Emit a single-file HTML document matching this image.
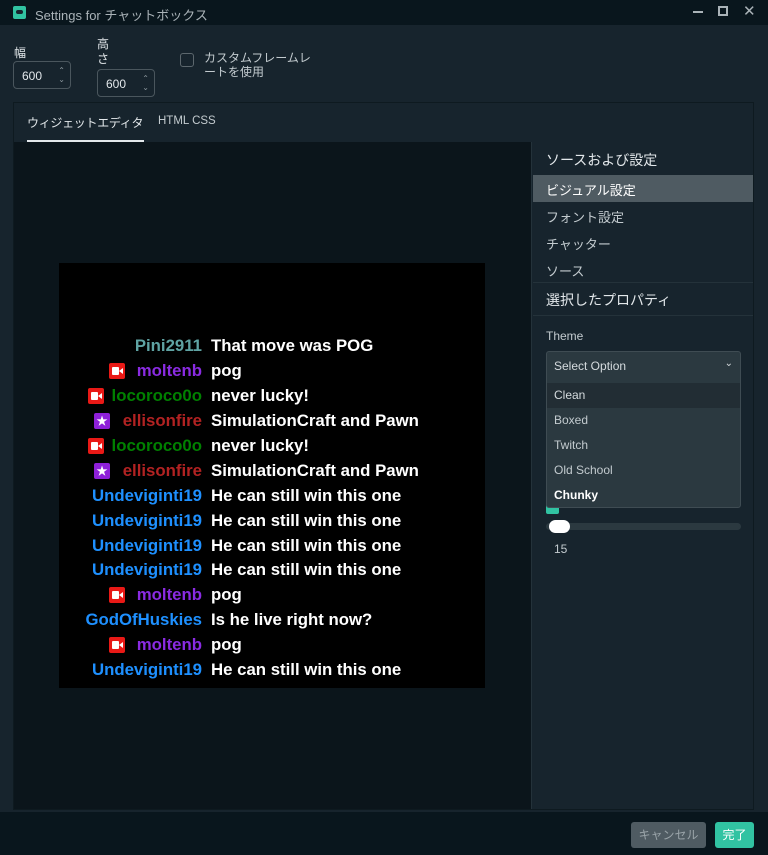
<!DOCTYPE html>
<html><head><meta charset="utf-8"><style>
*{margin:0;padding:0;box-sizing:border-box}
body{width:768px;height:855px;background:#17242d;font-family:"Liberation Sans","Noto Sans CJK JP",sans-serif;color:#e3e8eb;position:relative;overflow:hidden;font-size:12px}
.abs{position:absolute}
.title{left:0;top:0;width:768px;height:25px;background:#09161d}
.inp{border:1px solid #4a565d;border-radius:4px;width:58px;height:28px;font-size:12px;padding:7px 0 0 8px;color:#e3e8eb}
.arr{position:absolute;right:5px;top:4px;color:#8a959b;font-size:8px;line-height:9px}
.line{position:absolute;left:0;width:426px;height:24px;font-weight:bold;font-size:16.8px;font-family:"Liberation Sans",sans-serif}
.nm{position:absolute;right:283px;top:3px;white-space:nowrap}
.msg{position:absolute;left:152px;top:3px;color:#fff;white-space:nowrap}
.ic{position:absolute;top:5px;width:16px;height:16px;border-radius:2px}
.cam{background:#e91916}
.cam:after{content:"";position:absolute;left:3px;top:4px;width:7px;height:8px;background:#fff;border-radius:1px}
.cam:before{content:"";position:absolute;left:10px;top:5px;border:3px solid transparent;border-right:4px solid #fff;border-left:0;}
.sub{background:#8e20d8;color:#fff;font-size:12px;text-align:center;line-height:16px}
.side{font-size:13px;color:#c3cbcf}
.opt{position:absolute;left:0;width:194px;height:25px;padding:5px 0 0 7px;font-size:12px;color:#c3cbcf}
</style></head><body>
<div class="abs title">
 <div class="abs" style="left:13px;top:6px;width:13px;height:13px;background:#31c3a2;border-radius:2px"><div style="position:absolute;left:3px;top:4px;width:7px;height:4px;background:#17242d;border-radius:2px"></div></div>
 <div class="abs" style="left:35px;top:5px;font-size:13px;color:#aab3b8">Settings for チャットボックス</div>
 <div class="abs" style="left:693px;top:11px;width:10px;height:2px;background:#aab3b8"></div>
 <div class="abs" style="left:718px;top:6px;width:10px;height:10px;border:2px solid #aab3b8"></div>
 <div class="abs" style="left:743px;top:2px;font-size:15px;color:#aab3b8">✕</div>
</div>
<div class="abs" style="left:14px;top:44px;font-size:12px">幅</div>
<div class="abs inp" style="left:13px;top:61px">600<div class="arr">⌃<br>⌄</div></div>
<div class="abs" style="left:97px;top:37px;font-size:12px;line-height:15px">高<br>さ</div>
<div class="abs inp" style="left:97px;top:69px">600<div class="arr">⌃<br>⌄</div></div>
<div class="abs" style="left:180px;top:53px;width:14px;height:14px;border:1px solid #5c676d;border-radius:3px"></div>
<div class="abs" style="left:204px;top:51px;font-size:12px;line-height:14px;color:#c3cbcf">カスタムフレームレ<br>ートを使用</div>

<div class="abs" style="left:13px;top:102px;width:741px;height:708px;border:1px solid #0e1a20;background:#17242d"></div>
<div class="abs" style="left:27px;top:114px;font-size:12px;color:#e3e8eb;letter-spacing:-0.3px">ウィジェットエディタ</div>
<div class="abs" style="left:27px;top:140px;width:117px;height:2px;background:#e3e8eb"></div>
<div class="abs" style="left:158px;top:115px;font-size:11.5px;color:#c3cbcf">HTML CSS</div>
<div class="abs" style="left:14px;top:142px;width:517px;height:667px;background:#0b151b"></div>
<div class="abs" style="left:531px;top:142px;width:1px;height:667px;background:#24323a"></div>

<div class="abs" style="left:59px;top:263px;width:426px;height:425px;background:#000">
 <div class="line" style="top:70px"><span class="nm" style="color:#5fa3a3">Pini2911</span><span class="msg">That move was POG</span></div>
 <div class="line" style="top:95px"><div class="ic cam" style="left:50px"></div><span class="nm" style="color:#8a2be2">moltenb</span><span class="msg">pog</span></div>
 <div class="line" style="top:120px"><div class="ic cam" style="left:29px"></div><span class="nm" style="color:#008000">locoroco0o</span><span class="msg">never lucky!</span></div>
 <div class="line" style="top:145px"><div class="ic sub" style="left:35px">★</div><span class="nm" style="color:#b22222">ellisonfire</span><span class="msg">SimulationCraft and Pawn</span></div>
 <div class="line" style="top:170px"><div class="ic cam" style="left:29px"></div><span class="nm" style="color:#008000">locoroco0o</span><span class="msg">never lucky!</span></div>
 <div class="line" style="top:195px"><div class="ic sub" style="left:35px">★</div><span class="nm" style="color:#b22222">ellisonfire</span><span class="msg">SimulationCraft and Pawn</span></div>
 <div class="line" style="top:220px"><span class="nm" style="color:#1e90ff">Undeviginti19</span><span class="msg">He can still win this one</span></div>
 <div class="line" style="top:245px"><span class="nm" style="color:#1e90ff">Undeviginti19</span><span class="msg">He can still win this one</span></div>
 <div class="line" style="top:270px"><span class="nm" style="color:#1e90ff">Undeviginti19</span><span class="msg">He can still win this one</span></div>
 <div class="line" style="top:294px"><span class="nm" style="color:#1e90ff">Undeviginti19</span><span class="msg">He can still win this one</span></div>
 <div class="line" style="top:319px"><div class="ic cam" style="left:50px"></div><span class="nm" style="color:#8a2be2">moltenb</span><span class="msg">pog</span></div>
 <div class="line" style="top:344px"><span class="nm" style="color:#1e90ff">GodOfHuskies</span><span class="msg">Is he live right now?</span></div>
 <div class="line" style="top:369px"><div class="ic cam" style="left:50px"></div><span class="nm" style="color:#8a2be2">moltenb</span><span class="msg">pog</span></div>
 <div class="line" style="top:394px"><span class="nm" style="color:#1e90ff">Undeviginti19</span><span class="msg">He can still win this one</span></div>
</div>

<div class="abs" style="left:546px;top:150px;font-size:14px;color:#e3e8eb">ソースおよび設定</div>
<div class="abs" style="left:533px;top:175px;width:220px;height:27px;background:#4f5b62"></div>
<div class="abs side" style="left:546px;top:180px;color:#fff">ビジュアル設定</div>
<div class="abs side" style="left:546px;top:207px">フォント設定</div>
<div class="abs side" style="left:546px;top:234px">チャッター</div>
<div class="abs side" style="left:546px;top:261px">ソース</div>
<div class="abs" style="left:533px;top:282px;width:220px;height:1px;background:#24323a"></div>
<div class="abs" style="left:546px;top:290px;font-size:14px;color:#e3e8eb">選択したプロパティ</div>
<div class="abs" style="left:533px;top:315px;width:220px;height:1px;background:#24323a"></div>
<div class="abs" style="left:546px;top:329px;font-size:12px;color:#c3cbcf">Theme</div>
<div class="abs" style="left:546px;top:504px;width:13px;height:10px;background:#31c3a2;border-radius:2px"></div>
<div class="abs" style="left:546px;top:523px;width:195px;height:7px;background:#2b3940;border-radius:4px"></div>
<div class="abs" style="left:549px;top:520px;width:21px;height:13px;background:#fff;border-radius:7px"></div>
<div class="abs" style="left:554px;top:542px;font-size:12px;color:#c3cbcf">15</div>
<div class="abs" style="left:546px;top:351px;width:195px;height:157px;background:#2b3940;border:1px solid #3f4c53;border-radius:3px;overflow:hidden">
 <div class="opt" style="top:0;height:31px;padding-top:7px;color:#d5dbde">Select Option<span style="position:absolute;right:8px;top:6px;font-size:10px">⌄</span></div>
 <div class="opt" style="top:31px;background:#222d34;color:#d5dbde">Clean</div>
 <div class="opt" style="top:56px">Boxed</div>
 <div class="opt" style="top:81px">Twitch</div>
 <div class="opt" style="top:106px">Old School</div>
 <div class="opt" style="top:131px;color:#fff;font-weight:bold">Chunky</div>
</div>

<div class="abs" style="left:0;top:812px;width:768px;height:43px;background:#09161d"></div>
<div class="abs" style="left:631px;top:822px;width:75px;height:26px;background:#4f5b62;border-radius:3px;color:#9aa4a9;font-size:12px;text-align:center;line-height:26px">キャンセル</div>
<div class="abs" style="left:715px;top:822px;width:39px;height:26px;background:#31c3a2;border-radius:3px;color:#fff;font-size:12px;text-align:center;line-height:26px">完了</div>
</body></html>
